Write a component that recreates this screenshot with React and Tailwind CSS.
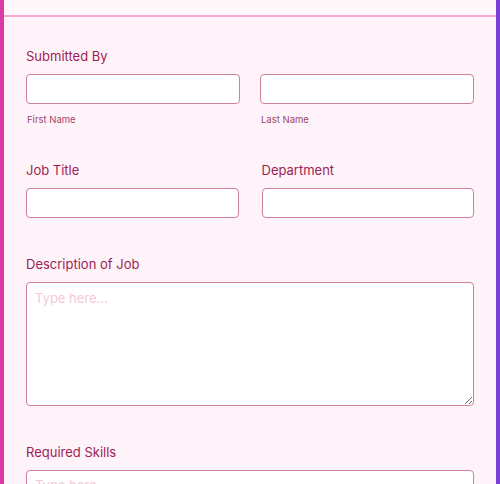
import React from 'react';

const font = { fontFamily: 'Inter, "Noto Sans", sans-serif' };

const labelCls = 'block text-[13px] font-normal leading-5 text-[#9d1d55]';

function Field({ label, children }) {
  return (
    <div className="flex flex-col">
      <label className={labelCls}>{label}</label>
      <div className="mt-[8px]">{children}</div>
    </div>
  );
}

const inputCls =
  'block h-[30px] w-full rounded-[4px] border border-[#cf7fa0] bg-white px-2 text-[13px] text-[#831843] outline-none';

export default function App() {
  return (
    <div className="min-h-[484px] bg-gradient-to-r from-[#db3aa6] to-[#7a3fd6] px-[4px]" style={font}>
      <div className="min-h-[484px] bg-[#fdf3f8]">
        <div className="h-[17px] border-b-2 border-[#f9a8d4] bg-[#fff6fa]" />
        <div className="px-[22px] pt-[29px]">
          <div>
            <label className={labelCls}>Submitted By</label>
            <div className="mt-[8px] grid grid-cols-2 gap-[20px]">
              <div>
                <input className={inputCls} />
                <div className="mt-[9px] pl-[1px] text-[9.5px] text-[#a2456f]">First Name</div>
              </div>
              <div>
                <input className={inputCls} />
                <div className="mt-[9px] pl-[1px] text-[9.5px] text-[#a2456f]">Last Name</div>
              </div>
            </div>
          </div>

          <div className="mt-[33px] grid grid-cols-2 gap-[23px]">
            <Field label="Job Title">
              <input className={inputCls} />
            </Field>
            <Field label="Department">
              <input className={inputCls} />
            </Field>
          </div>

          <div className="mt-[36px]">
            <Field label="Description of Job">
              <textarea
                placeholder="Type here..."
                className="block h-[124px] w-full rounded-[4px] border border-[#cf7fa0] bg-white px-2 py-[6px] text-[13px] text-[#831843] outline-none placeholder:text-[#f6c7da]"
              />
            </Field>
          </div>

          <div className="mt-[36px]">
            <Field label="Required Skills">
              <input placeholder="Type here..." className={inputCls + ' placeholder:text-[#f6c7da]'} />
            </Field>
          </div>
        </div>
      </div>
    </div>
  );
}
